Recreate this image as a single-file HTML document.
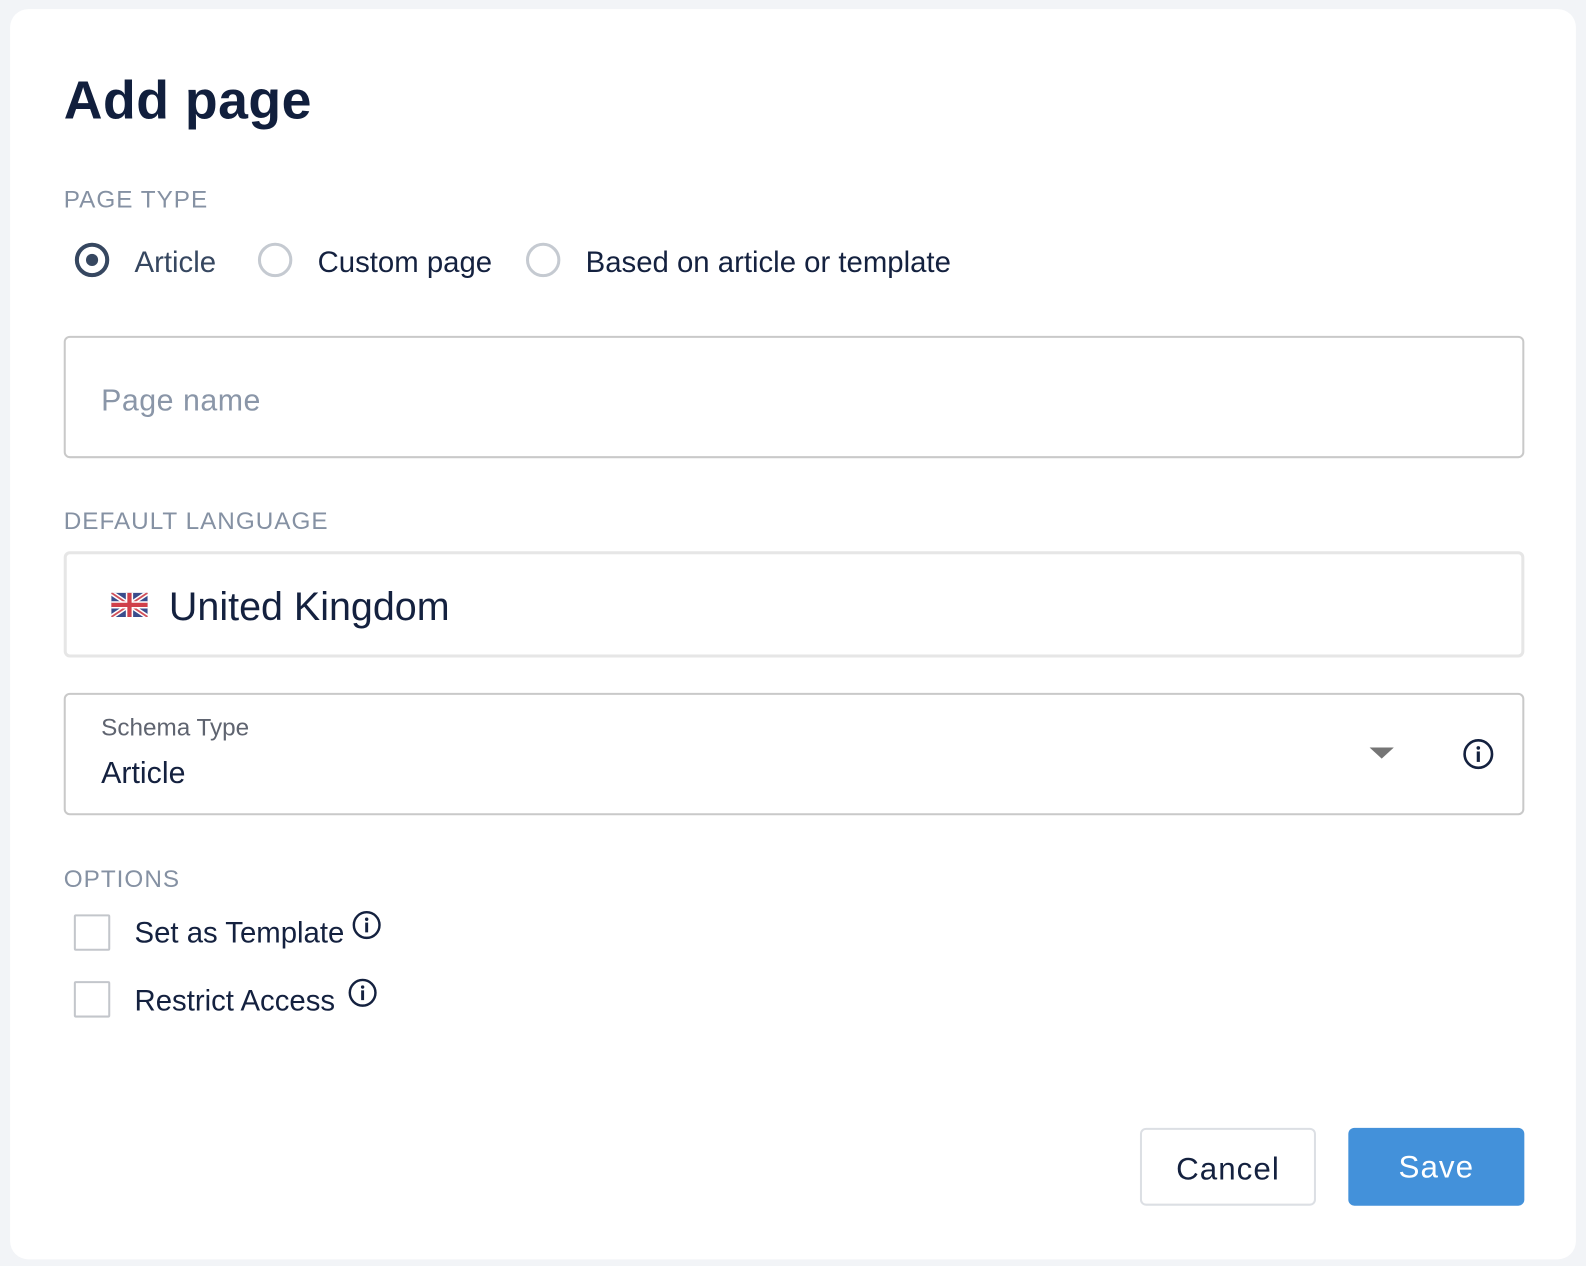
<!DOCTYPE html>
<html><head><meta charset="utf-8"><style>
*{box-sizing:border-box;margin:0;padding:0}
body{width:1586px;height:1266px;background:#f2f4f7;font-family:"Liberation Sans",sans-serif;position:relative;overflow:hidden}
#w{position:absolute;left:0;top:0;width:1568px;height:1252px;transform:scale(1.0115);transform-origin:0 0}
.card{position:absolute;left:10px;top:9px;width:1548px;height:1236px;background:#fff;border-radius:18px}
.a{position:absolute}
h1{position:absolute;left:63px;top:69px;font-size:53px;font-weight:bold;color:#111f3d;letter-spacing:0.5px}
.lbl{position:absolute;font-size:24px;color:#8591a3;letter-spacing:1px}
.t{position:absolute;font-size:29px;color:#14213f}
.radio{position:absolute;width:34px;height:34px;border-radius:50%;border:3px solid #c5cad1}
.box{position:absolute;left:63px;width:1444px;border:2px solid #c9c9c9;border-radius:6px}
.cb{position:absolute;left:73px;width:36px;height:36px;border:2px solid #c3c6cb;border-radius:2px}
.btn{position:absolute;top:1115px;height:77px;border-radius:6px;font-size:31px;text-align:center;line-height:77px;letter-spacing:1px}
</style></head><body><div id="w">
<div class="card"></div>
<h1>Add page</h1>
<div class="lbl" style="left:63px;top:184px">PAGE TYPE</div>
<div class="radio" style="left:74px;top:240px;border-color:#364760;border-width:4px"><div style="position:absolute;left:7px;top:7px;width:12px;height:12px;border-radius:50%;background:#364760"></div></div>
<div class="t" style="left:133px;top:244px;color:#364760">Article</div>
<div class="radio" style="left:255px;top:240px"></div>
<div class="t" style="left:314px;top:244px">Custom page</div>
<div class="radio" style="left:520px;top:240px"></div>
<div class="t" style="left:579px;top:244px">Based on article or template</div>
<div class="box" style="top:332px;height:121px"></div>
<div class="t" style="left:100px;top:380px;color:#8a96a8;font-size:30px;letter-spacing:0.5px">Page name</div>
<div class="lbl" style="left:63px;top:502px">DEFAULT LANGUAGE</div>
<div class="box" style="top:545px;height:105px;border:3px solid #e6e6e6"></div>
<svg class="a" style="left:110px;top:586px" width="36" height="24" viewBox="0 0 60 40"><rect width="60" height="40" fill="#3a4c8c"/><path d="M0 0L60 40M60 0L0 40" stroke="#fff" stroke-width="8"/><path d="M0 0L60 40M60 0L0 40" stroke="#d0505a" stroke-width="3"/><path d="M30 0V40M0 20H60" stroke="#fff" stroke-width="12"/><path d="M30 0V40M0 20H60" stroke="#d0404a" stroke-width="7"/></svg>
<div class="t" style="left:167px;top:579px;font-size:39px">United Kingdom</div>
<div class="box" style="top:685px;height:121px"></div>
<div class="t" style="left:100px;top:706px;font-size:24px;color:#5f6470">Schema Type</div>
<div class="t" style="left:100px;top:748px;font-size:30px">Article</div>
<svg class="a" style="left:1354px;top:739px" width="24" height="12"><path d="M0 0H24L12 11Z" fill="#757575"/></svg>
<svg class="a" style="left:1446px;top:730px" width="31" height="31" viewBox="0 0 24 24"><circle cx="12" cy="12" r="10.5" fill="none" stroke="#14213f" stroke-width="2"/><circle cx="12" cy="7.3" r="1.4" fill="#14213f"/><rect x="10.8" y="10" width="2.4" height="8" fill="#14213f"/></svg>
<div class="lbl" style="left:63px;top:856px">OPTIONS</div>
<div class="cb" style="top:904px"></div>
<div class="t" style="left:133px;top:907px">Set as Template</div>
<svg class="a" style="left:348px;top:900px" width="29" height="29" viewBox="0 0 24 24"><circle cx="12" cy="12" r="10.5" fill="none" stroke="#14213f" stroke-width="2"/><circle cx="12" cy="7.3" r="1.4" fill="#14213f"/><rect x="10.8" y="10" width="2.4" height="8" fill="#14213f"/></svg>
<div class="cb" style="top:970px"></div>
<div class="t" style="left:133px;top:974px">Restrict Access</div>
<svg class="a" style="left:344px;top:967px" width="29" height="29" viewBox="0 0 24 24"><circle cx="12" cy="12" r="10.5" fill="none" stroke="#14213f" stroke-width="2"/><circle cx="12" cy="7.3" r="1.4" fill="#14213f"/><rect x="10.8" y="10" width="2.4" height="8" fill="#14213f"/></svg>
<div class="btn" style="left:1127px;width:174px;border:2px solid #dcdfe4;color:#14213f">Cancel</div>
<div class="btn" style="left:1333px;width:174px;background:#4391da;color:#fff">Save</div>
</div></body></html>
